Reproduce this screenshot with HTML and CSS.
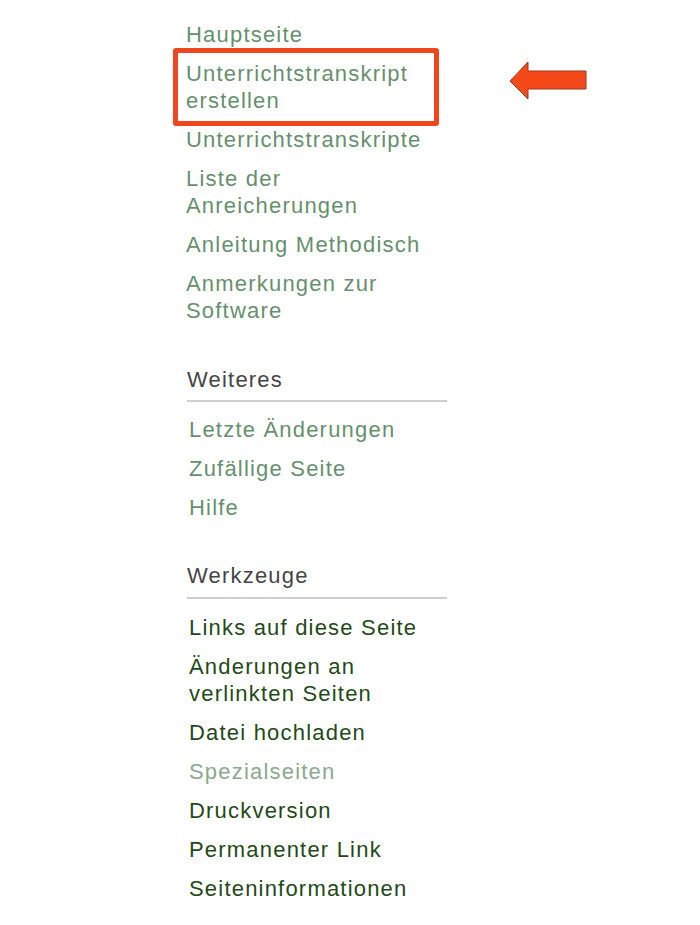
FILE: index.html
```html
<!DOCTYPE html>
<html lang="de">
<head>
<meta charset="utf-8">
<title>Sidebar</title>
<link rel="stylesheet" href="styles.css">
</head>
<body>
<div class="page">
  <nav class="sidebar">
    <div class="portal portal-nav">
      <ul>
        <li><a>Hauptseite</a></li>
        <li class="marked"><a>Unterrichtstranskript erstellen</a><span class="mark-box"></span></li>
        <li><a>Unterrichtstranskripte</a></li>
        <li><a>Liste der Anreicherungen</a></li>
        <li><a>Anleitung Methodisch</a></li>
        <li><a>Anmerkungen zur Software</a></li>
      </ul>
    </div>
    <div class="portal">
      <h3>Weiteres</h3>
      <ul>
        <li><a>Letzte Änderungen</a></li>
        <li><a>Zufällige Seite</a></li>
        <li><a>Hilfe</a></li>
      </ul>
    </div>
    <div class="portal portal-tools">
      <h3>Werkzeuge</h3>
      <ul>
        <li><a>Links auf diese Seite</a></li>
        <li><a>Änderungen an verlinkten Seiten</a></li>
        <li><a>Datei hochladen</a></li>
        <li class="special"><a>Spezialseiten</a></li>
        <li><a>Druckversion</a></li>
        <li><a>Permanenter Link</a></li>
        <li><a>Seiteninformationen</a></li>
      </ul>
    </div>
  </nav>
  <svg class="arrow" width="82" height="42" viewBox="0 0 82 42" aria-hidden="true">
    <polygon points="2,21 20,2 20,11 78,11 78,29 20,29 20,39" fill="#f5491a" stroke="#9a3a1c" stroke-width="1"/>
  </svg>
</div>
</body>
</html>
```

FILE: styles.css
```css
html, body {
  margin: 0;
  padding: 0;
  background: #ffffff;
}

.page {
  position: relative;
  width: 700px;
  height: 925px;
}

.sidebar {
  margin-left: 186px;
  width: 261px;
  padding-top: 15px;
  font-family: "Liberation Sans", Arial, sans-serif;
  font-size: 22px;
  letter-spacing: 1.2px;
  line-height: 27px;
}

.portal ul {
  list-style: none;
  margin: 0;
  padding: 0;
}

.portal li {
  padding: 6px 0;
}

.portal a {
  color: #66906d;
}

.portal h3 {
  margin: 36px 0 0 1px;
  padding-bottom: 7px;
  border-bottom: 2px solid #cfcfcf;
  font-size: 22px;
  font-weight: normal;
  color: #454545;
}

.portal + .portal ul {
  margin-top: 8px;
  padding-left: 3px;
}

.portal-tools h3 {
  margin-top: 35px;
  padding-bottom: 8px;
}

.portal-tools ul {
  margin-top: 9px !important;
}

.portal-tools a {
  color: #1f4a18;
}

.portal-tools .special a {
  color: #8ba98f;
}

.marked {
  position: relative;
}

.mark-box {
  position: absolute;
  left: -13px;
  top: -6px;
  bottom: -6px;
  width: 266px;
  box-sizing: border-box;
  border: 5px solid #f0461e;
  border-radius: 3px;
}

.arrow {
  position: absolute;
  left: 508px;
  top: 60px;
}
```
